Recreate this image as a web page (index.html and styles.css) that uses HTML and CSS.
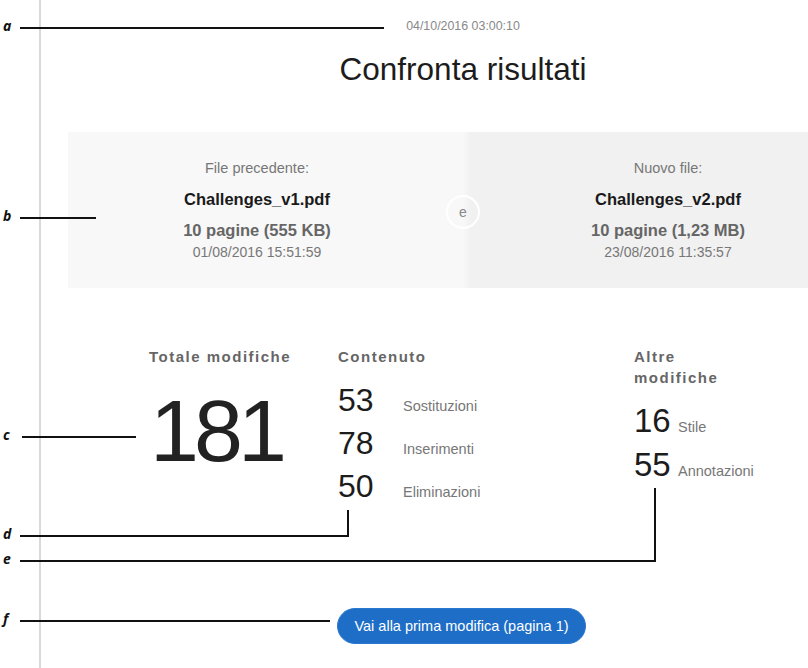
FILE: index.html
```html
<!DOCTYPE html>
<html lang="it">
<head>
<meta charset="utf-8">
<title>Confronta risultati</title>
<link rel="stylesheet" href="styles.css">
</head>
<body>
<div class="page">
  <div class="rail"></div>
  <main class="content">
    <div class="stamp">04/10/2016 03:00:10</div>
    <h1 class="title">Confronta risultati</h1>

    <section class="files">
      <div class="file file-old">
        <div class="file-label">File precedente:</div>
        <div class="file-name">Challenges_v1.pdf</div>
        <div class="file-size">10 pagine (555 KB)</div>
        <div class="file-date">01/08/2016 15:51:59</div>
      </div>
      <div class="file file-new">
        <div class="file-label">Nuovo file:</div>
        <div class="file-name">Challenges_v2.pdf</div>
        <div class="file-size">10 pagine (1,23 MB)</div>
        <div class="file-date">23/08/2016 11:35:57</div>
      </div>
      <div class="and">e</div>
    </section>

    <section class="stats">
      <div class="col col-total">
        <h2 class="heading">Totale modifiche</h2>
        <div class="total">181</div>
      </div>
      <div class="col col-content">
        <h2 class="heading">Contenuto</h2>
        <div class="rows rows-content">
          <span class="num">53</span><span class="lbl">Sostituzioni</span>
          <span class="num">78</span><span class="lbl">Inserimenti</span>
          <span class="num">50</span><span class="lbl">Eliminazioni</span>
        </div>
      </div>
      <div class="col col-other">
        <h2 class="heading heading-narrow">Altre modifiche</h2>
        <div class="rows rows-other">
          <span class="num">16</span><span class="lbl">Stile</span>
          <span class="num">55</span><span class="lbl">Annotazioni</span>
        </div>
      </div>
    </section>

    <div class="actions">
      <button class="btn" type="button">Vai alla prima modifica (pagina 1)</button>
    </div>
  </main>

  <div class="callouts">
    <span class="tag tag-a">a</span><div class="lead lead-a"></div>
    <span class="tag tag-b">b</span><div class="lead lead-b"></div>
    <span class="tag tag-c">c</span><div class="lead lead-c"></div>
    <span class="tag tag-d">d</span><div class="elbow elbow-d"></div>
    <span class="tag tag-e">e</span><div class="elbow elbow-e"></div>
    <span class="tag tag-f">f</span><div class="lead lead-f"></div>
  </div>
</div>
</body>
</html>
```

FILE: styles.css
```css
* { box-sizing: border-box; }

html, body {
  margin: 0;
  padding: 0;
  background: #ffffff;
}

body {
  width: 808px;
  height: 668px;
  overflow: hidden;
  font-family: "Liberation Sans", Arial, sans-serif;
  color: #222222;
}

.page {
  position: relative;
  display: flex;
  width: 808px;
  height: 668px;
  overflow: hidden;
}

.rail {
  flex: 0 0 2px;
  margin-left: 39px;
  height: 668px;
  background: #d9d9d9;
}

.content {
  flex: 0 0 844px;
  display: flex;
  flex-direction: column;
  align-items: center;
  padding-top: 19px;
}

.stamp {
  font-size: 12.4px;
  line-height: 14px;
  color: #888888;
}

.title {
  margin: 16px 0 0;
  font-size: 31.5px;
  line-height: 40px;
  font-weight: normal;
  color: #1c1c1c;
}

/* files panel */
.files {
  position: relative;
  align-self: stretch;
  margin: 43px 27px 0;
  display: grid;
  grid-template-columns: 1fr 1fr;
  height: 156px;
}

.file {
  display: flex;
  flex-direction: column;
  align-items: center;
  padding-top: 26px;
  text-align: center;
}

.file-old {
  background: #f8f8f8;
  padding-right: 17px;
}

.file-new {
  background: linear-gradient(to right, #f8f8f8 0, #f1f1f1 8px, #f1f1f1 100%);
  padding-left: 15px;
}

.file-label {
  font-size: 14.5px;
  line-height: 20px;
  color: #777777;
}

.file-name {
  margin-top: 10.5px;
  font-size: 16.5px;
  line-height: 20px;
  font-weight: bold;
  color: #1a1a1a;
}

.file-size {
  margin-top: 11px;
  font-size: 16.5px;
  line-height: 20px;
  font-weight: bold;
  color: #666666;
}

.file-date {
  margin-top: 2.8px;
  font-size: 14px;
  line-height: 20px;
  color: #777777;
}

.and {
  position: absolute;
  left: 50%;
  top: 80px;
  width: 34px;
  height: 34px;
  margin: -17px 0 0 -17px;
  border: 2px solid #ffffff;
  border-radius: 50%;
  display: flex;
  align-items: center;
  justify-content: center;
  font-size: 14px;
  color: #888888;
  background: transparent;
}

/* stats */
.stats {
  align-self: stretch;
  display: flex;
  margin-top: 58px;
  padding-left: 108px;
}

.col {
  display: flex;
  flex-direction: column;
}

.col-total {
  flex: 0 0 189px;
}

.col-content {
  flex: 0 0 296px;
}

.col-other {
  flex: 0 0 100px;
}

.heading {
  margin: 0;
  font-size: 15px;
  line-height: 21px;
  font-weight: bold;
  letter-spacing: 1.5px;
  color: #666666;
}

.heading-narrow {
  width: 96px;
}

.total {
  margin-top: 19px;
  margin-left: 1px;
  font-size: 88px;
  line-height: 90px;
  color: #222222;
  letter-spacing: -5px;
}

.rows {
  display: grid;
  align-items: baseline;
  white-space: nowrap;
}

.rows-content {
  margin-top: 12px;
  grid-template-columns: 65px auto;
  grid-auto-rows: 43px;
}

.rows-other {
  margin-top: 10.6px;
  grid-template-columns: 44px auto;
  grid-auto-rows: 44px;
}

.num {
  font-size: 32px;
  line-height: 43px;
  color: #1c1c1c;
}

.rows-other .num {
  font-size: 33px;
  line-height: 44px;
}

.lbl {
  font-size: 14.5px;
  color: #777777;
}

.rows-other .lbl {
  font-size: 14.5px;
}

/* button */
.actions {
  display: flex;
  justify-content: center;
  margin-top: 100px;
}

.btn {
  height: 36px;
  padding: 0 16px;
  margin-left: -3px;
  border: 1px solid #2a78cf;
  border-radius: 18px;
  background: #1e6ec8;
  color: #ffffff;
  font-family: "Liberation Sans", Arial, sans-serif;
  font-size: 14.5px;
  line-height: 34px;
  white-space: nowrap;
}

/* callouts (annotation overlay) */
.callouts {
  position: absolute;
  inset: 0;
  pointer-events: none;
}

.tag {
  position: absolute;
  left: 3px;
  font-family: "Noto Sans", "DejaVu Sans", sans-serif;
  font-style: italic;
  font-weight: bold;
  font-size: 14px;
  line-height: 14px;
  color: #111111;
}

.tag-a { top: 19px; }
.tag-b { top: 209px; }
.tag-c { top: 428px; }
.tag-d { top: 527px; }
.tag-e { top: 552px; }
.tag-f { top: 612px; }

.lead {
  position: absolute;
  height: 2px;
  background: #111111;
}

.lead-a { top: 27px; left: 20px; width: 364px; }
.lead-b { top: 217px; left: 20px; width: 76px; }
.lead-c { top: 436px; left: 22px; width: 114px; }
.lead-f { top: 620px; left: 20px; width: 310px; }

.elbow {
  position: absolute;
  border-bottom: 2px solid #111111;
  border-right: 2px solid #111111;
}

.elbow-d { top: 510px; left: 20px; width: 329px; height: 27px; }
.elbow-e { top: 488px; left: 20px; width: 636px; height: 74px; }
```
